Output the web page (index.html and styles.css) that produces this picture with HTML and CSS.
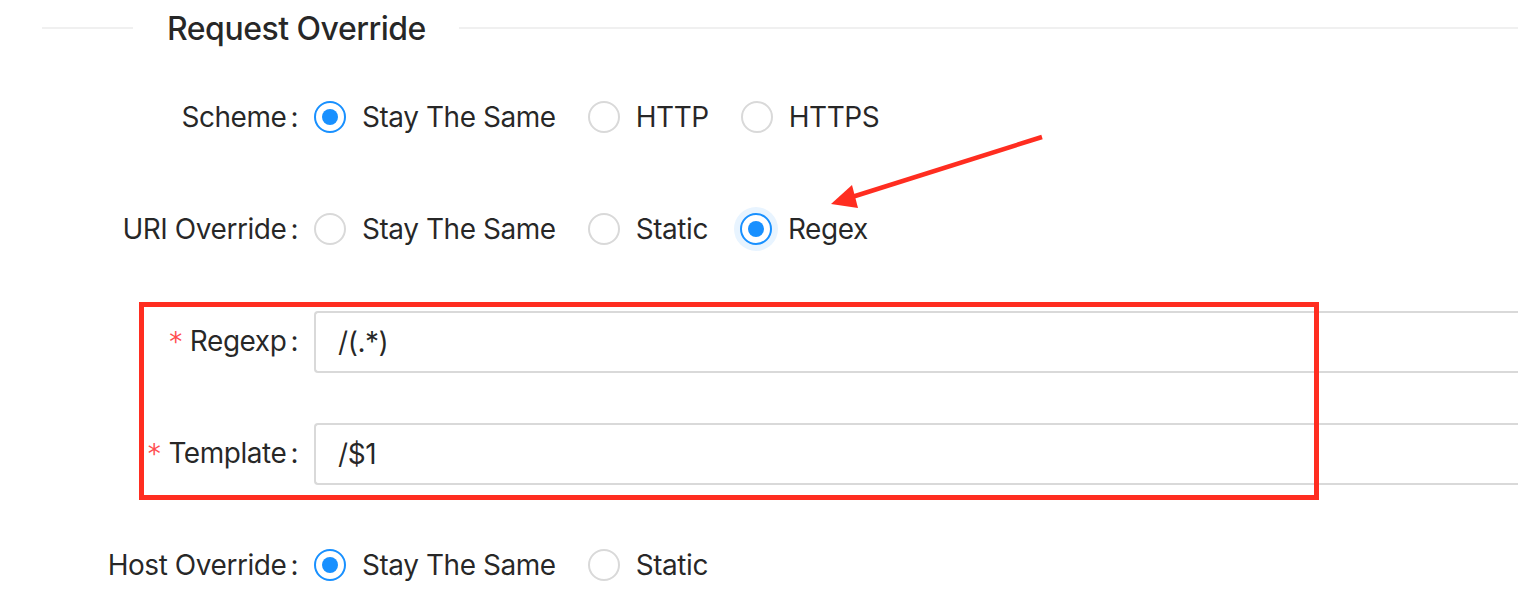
FILE: index.html
```html
<!DOCTYPE html>
<html lang="en">
<head>
  <meta charset="UTF-8" />
  <meta name="viewport" content="width=device-width, initial-scale=1.0" />
  <title>Request Override</title>
  <link rel="stylesheet" href="styles.css">
</head>
<body>

  <!-- Titulo da secao -->
  <div class="divider">
    <span class="divider-line divider-left"></span>
    <span class="divider-text">Request Override</span>
    <span class="divider-line divider-right"></span>
  </div>

  <div class="form">
    <div class="form-item">
      <label class="form-label">Scheme</label>
      <div class="form-control">
        <label class="radio checked"><span class="radio-inner"></span><span class="radio-text">Stay The Same</span></label>
        <label class="radio"><span class="radio-inner"></span><span class="radio-text">HTTP</span></label>
        <label class="radio"><span class="radio-inner"></span><span class="radio-text">HTTPS</span></label>
      </div>
    </div>

    <div class="form-item">
      <label class="form-label">URI Override</label>
      <div class="form-control">
        <label class="radio"><span class="radio-inner"></span><span class="radio-text">Stay The Same</span></label>
        <label class="radio"><span class="radio-inner"></span><span class="radio-text">Static</span></label>
        <label class="radio checked focused"><span class="radio-inner"></span><span class="radio-text">Regex</span></label>
      </div>
    </div>

    <div class="form-item">
      <label class="form-label required">Regexp</label>
      <div class="form-control">
        <input class="input" type="text" value="/(.*)">
      </div>
    </div>

    <div class="form-item">
      <label class="form-label required">Template</label>
      <div class="form-control">
        <input class="input" type="text" value="/$1">
      </div>
    </div>

    <div class="form-item">
      <label class="form-label">Host Override</label>
      <div class="form-control">
        <label class="radio checked"><span class="radio-inner"></span><span class="radio-text">Stay The Same</span></label>
        <label class="radio"><span class="radio-inner"></span><span class="radio-text">Static</span></label>
      </div>
    </div>
  </div>

  <!-- Marcacoes em vermelho -->
  <div class="mark-box"></div>
  <svg class="mark-arrow" width="1518" height="614" viewBox="0 0 1518 614">
    <line x1="1042" y1="137" x2="852" y2="197" stroke="#ff2d20" stroke-width="4.5" />
    <polygon points="831,204 852,185 858,208" fill="#ff2d20" />
  </svg>

</body>
</html>
```

FILE: styles.css
```css
* {
  box-sizing: border-box;
  margin: 0;
  padding: 0;
}

html, body {
  background: #ffffff;
  color: rgba(0, 0, 0, 0.85);
  font-family: Inter, "Noto Sans", sans-serif;
  letter-spacing: -0.45px;
  width: 1518px;
  height: 614px;
  overflow: hidden;
  position: relative;
}

.divider {
  display: flex;
  align-items: center;
  height: 56px;
  padding-left: 42px;
}

.divider-line {
  height: 2px;
  background-color: #f0f0f0;
}

.divider-left {
  width: 91px;
}

.divider-right {
  flex: 1;
}

.divider-text {
  font-size: 32px;
  font-weight: 500;
  letter-spacing: -0.5px;
  padding: 0 33px 0 34px;
  white-space: nowrap;
}

.form {
  margin-top: 29px;
  display: flex;
  flex-direction: column;
  gap: 48px;
}

.form-item {
  display: grid;
  grid-template-columns: 314px 1fr;
  height: 64px;
  align-items: center;
  font-size: 28px;
}

.form-label {
  text-align: right;
  white-space: nowrap;
  line-height: 64px;
}

.form-label::after {
  content: ":";
  margin: 0 16px 0 4px;
}

.form-label.required::before {
  content: "*";
  color: #ff4d4f;
  margin-right: 8px;
  font-family: "DejaVu Sans", sans-serif;
  font-size: 26px;
}

.form-control {
  display: flex;
  align-items: center;
}

.radio {
  display: inline-flex;
  align-items: center;
  margin-right: 16px;
  white-space: nowrap;
}

.radio-inner {
  position: relative;
  width: 32px;
  height: 32px;
  border: 2px solid #d9d9d9;
  border-radius: 50%;
  background: #fff;
}

.radio.checked .radio-inner {
  border-color: #1890ff;
}

.radio.checked .radio-inner::after {
  content: "";
  position: absolute;
  top: 6px;
  left: 6px;
  width: 16px;
  height: 16px;
  border-radius: 50%;
  background-color: #1890ff;
}

.radio.focused .radio-inner {
  box-shadow: 0 0 0 6px #e8f4ff;
}

.radio-text {
  padding: 0 16px;
}

/* o campo continua alem da borda direita do print */
.input {
  width: 100%;
  height: 62px;
  border: 2px solid #d9d9d9;
  border-right: none;
  border-radius: 4px 0 0 4px;
  padding: 0 22px;
  font-family: inherit;
  font-size: 28px;
  letter-spacing: -0.45px;
  color: rgba(0, 0, 0, 0.85);
  outline: none;
}

.mark-box {
  position: absolute;
  left: 139px;
  top: 302px;
  width: 1180px;
  height: 198px;
  border: 5px solid #ff2d20;
}

.mark-arrow {
  position: absolute;
  left: 0;
  top: 0;
  pointer-events: none;
}
```
